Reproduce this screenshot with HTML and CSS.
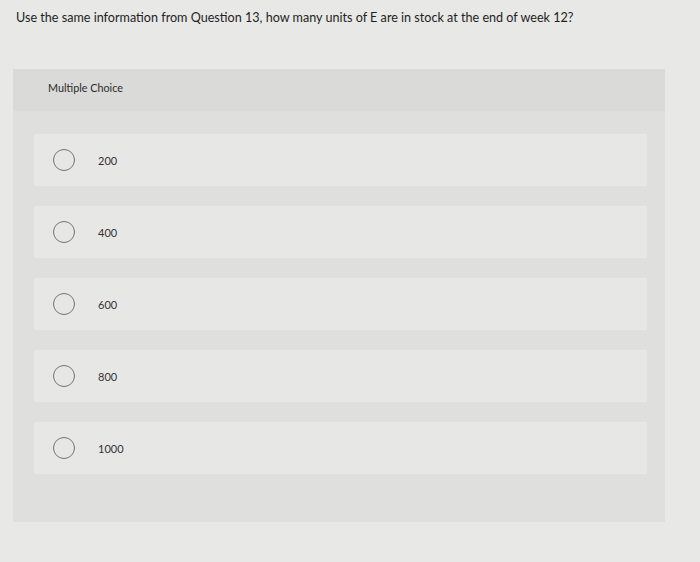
FILE: index.html
```html
<!DOCTYPE html>
<html>
<head>
<meta charset="utf-8">
<link rel="stylesheet" href="styles.css">
</head>
<body>
<p class="question">Use the same information from Question 13, how many units of E are in stock at the end of week 12?</p>
<div class="panel">
  <div class="panel-head">Multiple Choice</div>
  <div class="options">
    <div class="option"><span class="radio"></span><span class="label">200</span></div>
    <div class="option"><span class="radio"></span><span class="label">400</span></div>
    <div class="option"><span class="radio"></span><span class="label">600</span></div>
    <div class="option"><span class="radio"></span><span class="label">800</span></div>
    <div class="option"><span class="radio"></span><span class="label">1000</span></div>
  </div>
</div>
</body>
</html>
```
FILE: styles.css
```css
html, body {
  margin: 0;
  padding: 0;
}
body {
  background: #e8e8e7;
  font-family: Lato, "Open Sans", sans-serif;
  color: #222;
  width: 700px;
  height: 562px;
  overflow: hidden;
}
.question {
  margin: 0;
  padding: 10px 0 0 16px;
  font-size: 12.6px;
  line-height: 16px;
  color: #1e1e1e;
}
.panel {
  margin: 43px 0 0 13px;
  width: 652px;
  background: #dfdfde;
}
.panel-head {
  height: 42px;
  box-sizing: border-box;
  padding: 12px 0 0 35px;
  font-size: 10.8px;
  line-height: 14px;
  color: #2a2a2a;
  background: #dadad9;
}
.options {
  display: flex;
  flex-direction: column;
  gap: 20px;
  padding: 23px 18px 48px 21px;
}
.option {
  height: 52px;
  display: flex;
  align-items: center;
  background: #e7e7e6;
  padding-left: 19px;
}
.radio {
  width: 20px;
  height: 20px;
  border: 1.5px solid #74747a;
  border-radius: 50%;
  flex: none;
}
.label {
  margin-left: 23px;
  font-size: 11px;
  color: #333;
}
```
